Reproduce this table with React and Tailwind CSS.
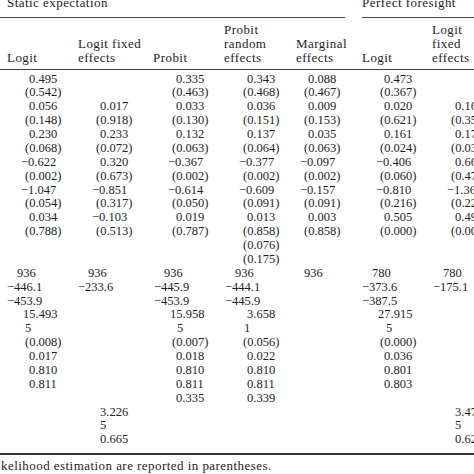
const P = "pl-[29px]";
const Q = "pl-[25px]";
const N = "pl-[21px]";
const B = "pl-[17px]";
const L = "pl-[7px]";
const T = "pl-[23px]";

const widths = ["w-[71px]", "w-[76px]", "w-[71px]", "w-[61px]", "w-[76px]", "w-[71px]", "w-[48px]"];

const headers = [
  { lines: ["Logit"], cls: "pl-[7px]" },
  { lines: ["Logit fixed", "effects"], cls: "pl-[7px]" },
  { lines: ["Probit"], cls: "pl-[6px]" },
  { lines: ["Probit", "random", "effects"], cls: "pl-[6px]" },
  { lines: ["Marginal", "effects"], cls: "pl-[17px]" },
  { lines: ["Logit"], cls: "pl-[7px]" },
  { lines: ["Logit", "fixed", "effects"], cls: "pl-[6px]" },
];

const rows = [
  [["0.495", P], null, ["0.335", P], ["0.343", P], ["0.088", P], ["0.473", P], null],
  [["(0.542)", Q], null, ["(0.463)", Q], ["(0.468)", Q], ["(0.467)", Q], ["(0.367)", Q], null],
  [["0.056", P], ["0.017", P], ["0.033", P], ["0.036", P], ["0.009", P], ["0.020", P], ["0.164", P]],
  [["(0.148)", Q], ["(0.918)", Q], ["(0.130)", Q], ["(0.151)", Q], ["(0.153)", Q], ["(0.621)", Q], ["(0.352)", Q]],
  [["0.230", P], ["0.233", P], ["0.132", P], ["0.137", P], ["0.035", P], ["0.161", P], ["0.172", P]],
  [["(0.068)", Q], ["(0.072)", Q], ["(0.063)", Q], ["(0.064)", Q], ["(0.063)", Q], ["(0.024)", Q], ["(0.031)", Q]],
  [["−0.622", N], ["0.320", P], ["−0.367", N], ["−0.377", N], ["−0.097", N], ["−0.406", N], ["0.664", P]],
  [["(0.002)", Q], ["(0.673)", Q], ["(0.002)", Q], ["(0.002)", Q], ["(0.002)", Q], ["(0.060)", Q], ["(0.471)", Q]],
  [["−1.047", N], ["−0.851", N], ["−0.614", N], ["−0.609", N], ["−0.157", N], ["−0.810", N], ["−1.364", N]],
  [["(0.054)", Q], ["(0.317)", Q], ["(0.050)", Q], ["(0.091)", Q], ["(0.091)", Q], ["(0.216)", Q], ["(0.223)", Q]],
  [["0.034", P], ["−0.103", N], ["0.019", P], ["0.013", P], ["0.003", P], ["0.505", P], ["0.495", P]],
  [["(0.788)", Q], ["(0.513)", Q], ["(0.787)", Q], ["(0.858)", Q], ["(0.858)", Q], ["(0.000)", Q], ["(0.000)", Q]],
  [null, null, null, ["(0.076)", Q], null, null, null],
  [null, null, null, ["(0.175)", Q], null, null, null],
  [["936", B], ["936", B], ["936", B], ["936", B], ["936", Q], ["780", B], ["780", B]],
  [["−446.1", L], ["−233.6", L], ["−445.9", L], ["−444.1", L], null, ["−373.6", L], ["−175.1", L]],
  [["−453.9", L], null, ["−453.9", L], ["−445.9", L], null, ["−387.5", L], null],
  [["15.493", T], null, ["15.958", T], ["3.658", P], null, ["27.915", T], null],
  [["5", "pl-[25px]"], null, ["5", "pl-[30px]"], ["1", "pl-[26px]"], null, ["5", "pl-[31px]"], null],
  [["(0.008)", Q], null, ["(0.007)", Q], ["(0.056)", Q], null, ["(0.000)", Q], null],
  [["0.017", P], null, ["0.018", P], ["0.022", P], null, ["0.036", P], null],
  [["0.810", P], null, ["0.810", P], ["0.810", P], null, ["0.801", P], null],
  [["0.811", P], null, ["0.811", P], ["0.811", P], null, ["0.803", P], null],
  [null, null, ["0.335", P], ["0.339", P], null, null, null],
  [null, ["3.226", P], null, null, null, null, ["3.471", P]],
  [null, ["5", P], null, null, null, null, ["5", P]],
  [null, ["0.665", P], null, null, null, null, ["0.627", P]],
];

// word labels are set a little wider than the figures
const label = "text-[13px] tracking-[0.45px] whitespace-nowrap";

export default function App() {
  return (
    <div className="w-[474px] h-[474px] overflow-hidden bg-white text-[#1e1e1e] font-['Liberation_Serif','Times_New_Roman',serif] text-[12.5px] leading-[13.88px]">
      {/* group headings */}
      <div className="flex">
        <div className="w-[345px] shrink-0 border-b border-[#4a4a4a] pb-[7px]">
          <div className={`-mt-[4px] pl-[7px] ${label}`}>Static expectation</div>
        </div>
        <div className="ml-[17px] flex-1 border-b border-[#4a4a4a] pb-[7px]">
          <div className={`-mt-[4px] ${label}`}>Perfect foresight</div>
        </div>
      </div>

      {/* column headings */}
      <div className="flex items-end pt-[5px] pb-[4px] border-b-[1.5px] border-[#444]">
        {headers.map((h, i) => (
          <div key={i} className={`${widths[i]} shrink-0 ${label} ${h.cls}`}>
            {h.lines.map((l, j) => (
              <div key={j}>{l}</div>
            ))}
          </div>
        ))}
      </div>

      {/* body */}
      <div className="mt-[3px] pb-[6px] border-b-2 border-[#333]">
        {rows.map((r, i) => (
          <div key={i} className="flex h-[13.88px]">
            {r.map((c, j) => (
              <div key={j} className={`${widths[j]} shrink-0 whitespace-nowrap`}>
                {c && <span className={`block ${c[1]}`}>{c[0]}</span>}
              </div>
            ))}
          </div>
        ))}
      </div>

      <div className={`mt-[4px] pl-[1px] ${label}`}>
        kelihood estimation are reported in parentheses.
      </div>
    </div>
  );
}
